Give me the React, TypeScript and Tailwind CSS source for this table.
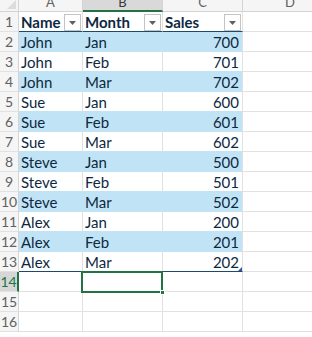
import React from 'react';

type Row = { name: string; month: string; sales: number };

const data: Row[] = [
  { name: 'John', month: 'Jan', sales: 700 },
  { name: 'John', month: 'Feb', sales: 701 },
  { name: 'John', month: 'Mar', sales: 702 },
  { name: 'Sue', month: 'Jan', sales: 600 },
  { name: 'Sue', month: 'Feb', sales: 601 },
  { name: 'Sue', month: 'Mar', sales: 602 },
  { name: 'Steve', month: 'Jan', sales: 500 },
  { name: 'Steve', month: 'Feb', sales: 501 },
  { name: 'Steve', month: 'Mar', sales: 502 },
  { name: 'Alex', month: 'Jan', sales: 200 },
  { name: 'Alex', month: 'Feb', sales: 201 },
  { name: 'Alex', month: 'Mar', sales: 202 },
];

const gridCols = 'grid grid-cols-[19px_64px_80px_80px_1fr]';
const font = { fontFamily: '"Lato", "Open Sans", sans-serif' };

function FilterButton() {
  return (
    <div className="absolute right-[1px] top-[2px] w-[17px] h-[17px] border border-[#c4c4c4] bg-white flex items-center justify-center">
      <svg width="7" height="4" viewBox="0 0 7 4">
        <path d="M0 0 L7 0 L3.5 4 Z" fill="#5f5f5f" />
      </svg>
    </div>
  );
}

function RowNum({ n, active }: { n: number; active?: boolean }) {
  return (
    <div
      className={
        active
          ? 'h-[20px] bg-[#d6d6d6] border-r-2 border-r-[#217346] border-b border-b-[#e1e1e1] text-[#217346] text-[14px] leading-[20px] text-center'
          : 'h-[20px] bg-[#f5f5f5] border-r border-r-[#d4d4d4] border-b border-b-[#e1e1e1] text-[#616161] text-[14px] leading-[20px] text-center'
      }
    >
      {n}
    </div>
  );
}

export default function App() {
  return (
    <div className="w-[312px] h-[337px] bg-white overflow-hidden relative select-none" style={font}>
      {/* Column letters (sheet is scrolled, so they are cut at the top) */}
      <div className={`${gridCols} h-[12px]`}>
        <div className="relative bg-[#f5f5f5] border-r border-b border-[#d4d4d4] overflow-hidden">
          <svg className="absolute right-[2px] bottom-[2px]" width="9" height="9" viewBox="0 0 9 9">
            <path d="M9 0 L9 9 L0 9 Z" fill="#dcdcdc" />
          </svg>
        </div>
        <div className="bg-[#f5f5f5] border-r border-b border-[#d4d4d4] overflow-hidden text-center text-[13px] leading-none text-[#616161]">
          <div className="-mt-[4px]">A</div>
        </div>
        <div className="bg-[#d9d9d9] border-r border-[#d4d4d4] border-b-2 border-b-[#217346] overflow-hidden text-center text-[13px] leading-none text-[#3a3a3a]">
          <div className="-mt-[4px]">B</div>
        </div>
        <div className="bg-[#f5f5f5] border-r border-b border-[#d4d4d4] overflow-hidden text-center text-[13px] leading-none text-[#616161]">
          <div className="-mt-[4px]">C</div>
        </div>
        <div className="bg-[#f5f5f5] border-b border-[#d4d4d4] overflow-hidden text-[13px] leading-none text-[#616161]">
          <div className="-mt-[4px] w-[94px] text-center">D</div>
        </div>
      </div>

      {/* Header row of the table */}
      <div className={gridCols}>
        <RowNum n={1} />
        <div className="relative h-[20px] border-r border-r-[#e1e1e1] border-b border-b-[#1a4a70] pl-[2px] text-[15px] font-bold leading-[20px] text-[#0e2841]">
          Name
          <FilterButton />
        </div>
        <div className="relative h-[20px] border-r border-r-[#e1e1e1] border-b border-b-[#1a4a70] pl-[2px] text-[15px] font-bold leading-[20px] text-[#0e2841]">
          Month
          <FilterButton />
        </div>
        <div className="relative h-[20px] border-r border-r-[#e1e1e1] border-b border-b-[#1a4a70] pl-[2px] text-[15px] font-bold leading-[20px] text-[#0e2841]">
          Sales
          <FilterButton />
        </div>
        <div className="h-[20px] border-b border-[#e1e1e1]" />
      </div>

      {/* Data rows */}
      {data.map((r, i) => {
        const banded = i % 2 === 0;
        const last = i === data.length - 1;
        const cell = banded
          ? 'h-[20px] bg-[#c0e4f5] border-r border-r-[#c0e4f5] text-[15px] leading-[20px] text-[#0e2841]'
          : 'h-[20px] bg-white border-r border-r-[#e1e1e1] text-[15px] leading-[20px] text-[#0e2841]';
        const bottom = last ? 'border-b border-b-[#1a4a70]' : 'border-b border-b-[#c0e4f5]';
        return (
          <div key={i} className={gridCols}>
            <RowNum n={i + 2} />
            <div className={`${cell} ${bottom} pl-[2px]`}>{r.name}</div>
            <div className={`${cell} ${bottom} pl-[2px]`}>{r.month}</div>
            <div className={`relative ${cell} ${bottom} border-r-[#e1e1e1] pr-[3px] text-right`}>
              {r.sales}
              {last && (
                <svg className="absolute right-0 bottom-0" width="4" height="4" viewBox="0 0 4 4">
                  <path d="M4 0 L4 4 L0 4 Z" fill="#3a55a0" />
                </svg>
              )}
            </div>
            <div className="h-[20px] border-b border-[#e1e1e1]" />
          </div>
        );
      })}

      {/* Empty rows */}
      {[14, 15, 16].map((n) => (
        <div key={n} className={gridCols}>
          <RowNum n={n} active={n === 14} />
          <div className="h-[20px] border-r border-b border-[#e1e1e1]" />
          <div className="h-[20px] border-r border-b border-[#e1e1e1]" />
          <div className="h-[20px] border-r border-b border-[#e1e1e1]" />
          <div className="h-[20px] border-b border-[#e1e1e1]" />
        </div>
      ))}

      {/* Active cell selection B14 */}
      <div className="absolute left-[81px] top-[271px] w-[82px] h-[22px] border-2 border-[#217346] pointer-events-none">
        <div className="absolute -right-[4px] -bottom-[4px] w-[5px] h-[5px] bg-[#217346] border border-white" />
      </div>
    </div>
  );
}
